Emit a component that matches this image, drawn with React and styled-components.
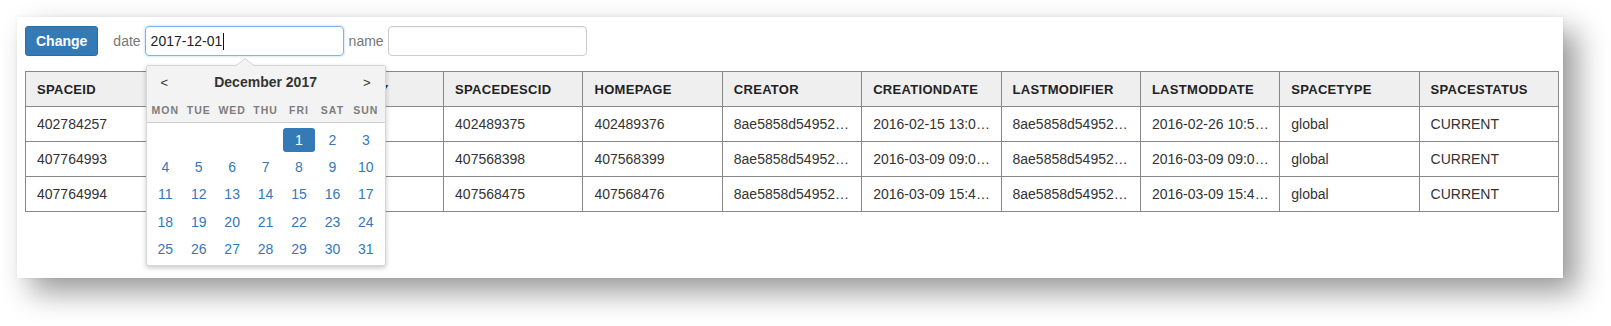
import React from "react";
import styled, { createGlobalStyle } from "styled-components";

const Global = createGlobalStyle`
  html, body {
    margin: 0;
    padding: 0;
    background: #ffffff;
    font-family: "Liberation Sans", Arial, sans-serif;
  }
`;

const Page = styled.div`
  min-height: 326px;
  padding: 17px 0 0 17px;
  box-sizing: border-box;
  overflow: hidden;
`;

/* Screenshot frame with offset shadow */
const Frame = styled.div`
  width: 1546px;
  height: 261px;
  box-sizing: border-box;
  padding: 9px 4px 0 8px;
  background: #fff;
  box-shadow: 14px 14px 28px rgba(0, 0, 0, 0.4), 0 0 4px rgba(0, 0, 0, 0.06);
`;

const Toolbar = styled.div`
  display: flex;
  align-items: center;
  height: 30px;
`;

const Button = styled.button`
  height: 30px;
  padding: 0 10px;
  border: 1px solid #2e6da4;
  border-radius: 3px;
  background: #337ab7;
  color: #fff;
  font-family: inherit;
  font-size: 14px;
  font-weight: bold;
  margin-right: 15px;
`;

const Label = styled.span`
  color: #777;
  font-size: 14px;
  margin-right: 4px;
`;

const Field = styled.div`
  position: relative;
  width: 199px;
  height: 30px;
  box-sizing: border-box;
  border: 1px solid ${(p) => (p.$focus ? "#7fb1e6" : "#ccc")};
  border-radius: 4px;
  box-shadow: ${(p) =>
    p.$focus ? "0 0 3px rgba(102,175,233,0.55)" : "inset 0 1px 1px rgba(0,0,0,0.05)"};
  margin-right: 5px;
  display: flex;
  align-items: center;
  padding-left: 5px;
  font-size: 14px;
  color: #222;
`;

const Caret = styled.span`
  display: inline-block;
  width: 1px;
  height: 17px;
  background: #111;
  margin-left: 1px;
`;

/* Date picker popup */
const Picker = styled.div`
  position: absolute;
  left: 0;
  top: 38px;
  width: 240px;
  height: 201px;
  box-sizing: border-box;
  background: #fff;
  border: 1px solid #d6d6d6;
  border-radius: 2px;
  box-shadow: 0 2px 5px rgba(0, 0, 0, 0.22);
  z-index: 5;

  &::before,
  &::after {
    content: "";
    position: absolute;
    left: 88px;
    border-style: solid;
    border-color: transparent;
  }
  &::before {
    top: -8px;
    border-width: 0 10px 8px 10px;
    border-bottom-color: #cfcfcf;
  }
  &::after {
    top: -7px;
    left: 89px;
    border-width: 0 9px 7px 9px;
    border-bottom-color: #f3f3f3;
  }
`;

const PickerHead = styled.div`
  background: #f3f3f3;
  border-bottom: 1px solid #cfcfcf;
`;

const MonthRow = styled.div`
  display: flex;
  align-items: center;
  justify-content: space-between;
  height: 32px;
  padding: 0 14px 0 14px;
  font-size: 14px;
  color: #333;
`;

const Nav = styled.span`
  font-size: 13px;
  color: #333;
`;

const MonthTitle = styled.span`
  font-weight: bold;
`;

const Grid = styled.div`
  display: grid;
  grid-template-columns: repeat(7, 1fr);
  padding: 0 2px;
  align-items: center;
`;

const DayName = styled.div`
  height: 24px;
  line-height: 24px;
  text-align: center;
  font-size: 10.5px;
  font-weight: bold;
  letter-spacing: 1px;
  color: #7d7d7d;
`;

const Days = styled(Grid)`
  padding-top: 3px;
  grid-auto-rows: 27.4px;
`;

const Day = styled.div`
  justify-self: center;
  width: 32px;
  height: 24px;
  line-height: 24px;
  text-align: center;
  font-size: 14px;
  border-radius: 3px;
  color: ${(p) => (p.$active ? "#fff" : "#3577bd")};
  background: ${(p) => (p.$active ? "#337ab7" : "transparent")};
`;

/* Data table */
const Table = styled.table`
  margin-top: 15px;
  width: 1534px;
  border-collapse: collapse;
  table-layout: fixed;
  font-size: 14px;
  color: #333;
`;

const Th = styled.th`
  height: 35px;
  box-sizing: border-box;
  padding: 0 10px 0 11px;
  border: 1px solid #888;
  background: #efefef;
  text-align: left;
  font-size: 13px;
  font-weight: bold;
  letter-spacing: 0.3px;
  color: #222;
  white-space: nowrap;
  overflow: hidden;
`;

const Td = styled.td`
  height: 35px;
  box-sizing: border-box;
  padding: 0 9px 0 11px;
  border: 1px solid #888;
  white-space: nowrap;
  overflow: hidden;
  text-overflow: ellipsis;
`;

const columns = [
  "SPACEID",
  "SPACENAME",
  "SPACEKEY",
  "SPACEDESCID",
  "HOMEPAGE",
  "CREATOR",
  "CREATIONDATE",
  "LASTMODIFIER",
  "LASTMODDATE",
  "SPACETYPE",
  "SPACESTATUS",
];

const rows = [
  ["402784257", "Demo", "DS", "402489375", "402489376", "8ae5858d549526bb0154952a", "2016-02-15 13:02:11", "8ae5858d549526bb0154952a", "2016-02-26 10:55:40", "global", "CURRENT"],
  ["407764993", "Team", "TS", "407568398", "407568399", "8ae5858d549526bb0154952a", "2016-03-09 09:03:27", "8ae5858d549526bb0154952a", "2016-03-09 09:03:27", "global", "CURRENT"],
  ["407764994", "Docs", "DC", "407568475", "407568476", "8ae5858d549526bb0154952a", "2016-03-09 15:41:02", "8ae5858d549526bb0154952a", "2016-03-09 15:41:02", "global", "CURRENT"],
];

const weekDays = ["MON", "TUE", "WED", "THU", "FRI", "SAT", "SUN"];

const DatePicker = () => {
  const cells = [];
  for (let i = 0; i < 4; i++) cells.push(<div key={"b" + i} />);
  for (let d = 1; d <= 31; d++) {
    cells.push(
      <Day key={d} $active={d === 1}>
        {d}
      </Day>
    );
  }
  return (
    <Picker>
      <PickerHead>
        <MonthRow>
          <Nav>&lt;</Nav>
          <MonthTitle>December 2017</MonthTitle>
          <Nav>&gt;</Nav>
        </MonthRow>
        <Grid>
          {weekDays.map((w) => (
            <DayName key={w}>{w}</DayName>
          ))}
        </Grid>
      </PickerHead>
      <Days>{cells}</Days>
    </Picker>
  );
};

export default function App() {
  return (
    <Page>
      <Global />
      <Frame>
        <Toolbar>
          <Button>Change</Button>
          <Label>date</Label>
          <Field $focus>
            2017-12-01
            <Caret />
            <DatePicker />
          </Field>
          <Label>name</Label>
          <Field />
        </Toolbar>
        <Table>
          <thead>
            <tr>
              {columns.map((c) => (
                <Th key={c}>{c}</Th>
              ))}
            </tr>
          </thead>
          <tbody>
            {rows.map((r, i) => (
              <tr key={i}>
                {r.map((v, j) => (
                  <Td key={j}>{v}</Td>
                ))}
              </tr>
            ))}
          </tbody>
        </Table>
      </Frame>
    </Page>
  );
}
